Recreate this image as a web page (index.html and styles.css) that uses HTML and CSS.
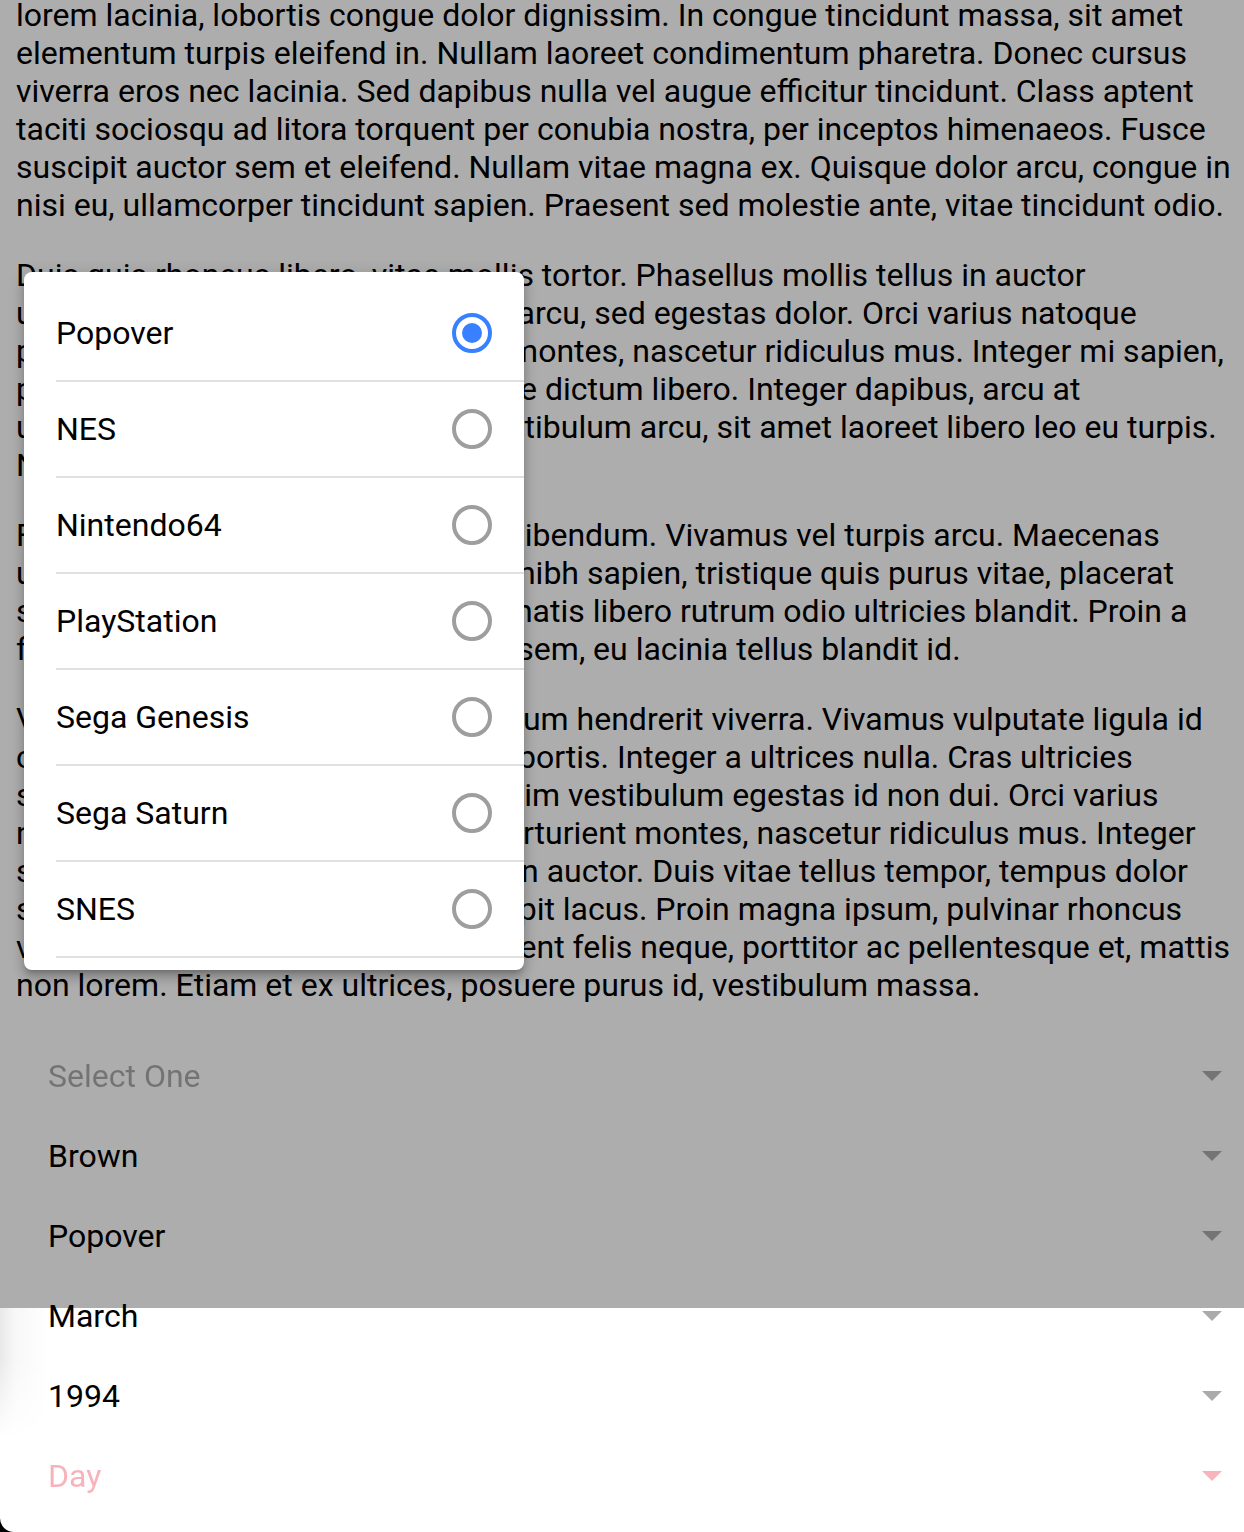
FILE: index.html
```html
<!DOCTYPE html>
<html lang="en">
<head>
<meta charset="utf-8">
<title>Select Popover</title>
<link rel="stylesheet" href="styles.css">
</head>
<body>
<div class="page">
  <div class="edge-shadow"></div>
  <main class="content">
    <p class="para first">lorem lacinia, lobortis congue dolor dignissim. In congue tincidunt massa, sit amet elementum turpis eleifend in. Nullam laoreet condimentum pharetra. Donec cursus viverra eros nec lacinia. Sed dapibus nulla vel augue efficitur tincidunt. Class aptent taciti sociosqu ad litora torquent per conubia nostra, per inceptos himenaeos. Fusce suscipit auctor sem et eleifend. Nullam vitae magna ex. Quisque dolor arcu, congue in nisi eu, ullamcorper tincidunt sapien. Praesent sed molestie ante, vitae tincidunt odio.</p>
    <p class="para">Duis quis rhoncus libero, vitae mollis tortor. Phasellus mollis tellus in auctor ullamcorper neque. Maecenas nisi, arcu, sed egestas dolor. Orci varius natoque penatibus et magnis dis parturient montes, nascetur ridiculus mus. Integer mi sapien, pellentesque eu lorem vitae, tristique dictum libero. Integer dapibus, arcu at ullamcorper justo. Aliquam erat, vestibulum arcu, sit amet laoreet libero leo eu turpis. Nunc at ultrices magna.</p>
    <p class="para">Fusce laoreet nunc vitae justo nec bibendum. Vivamus vel turpis arcu. Maecenas ultrices tortor, in consequat dolor a nibh sapien, tristique quis purus vitae, placerat sagittis. Suspendisse a lorem, venenatis libero rutrum odio ultricies blandit. Proin a feugiat mauris, vel ultrices ipsum a sem, eu lacinia tellus blandit id.</p>
    <p class="para">Vestibulum ante ipsum ut nisl a dictum hendrerit viverra. Vivamus vulputate ligula id congue eget, tristique sapien nec lobortis. Integer a ultrices nulla. Cras ultricies sollicitudin lorem, in a quam dignissim vestibulum egestas id non dui. Orci varius natoque penatibus et magnis dis parturient montes, nascetur ridiculus mus. Integer scelerisque massa, vitae aliquet ut in auctor. Duis vitae tellus tempor, tempus dolor sed ornare tellus. Aenean nec suscipit lacus. Proin magna ipsum, pulvinar rhoncus vitae sapien nunc consequat. Praesent felis neque, porttitor ac pellentesque et, mattis non lorem. Etiam et ex ultrices, posuere purus id, vestibulum massa.</p>

    <div class="select-list">
      <div class="select-row"><span class="select-text placeholder">Select One</span><span class="select-icon"></span></div>
      <div class="select-row"><span class="select-text">Brown</span><span class="select-icon"></span></div>
      <div class="select-row"><span class="select-text">Popover</span><span class="select-icon"></span></div>
      <div class="select-row"><span class="select-text">March</span><span class="select-icon"></span></div>
      <div class="select-row"><span class="select-text">1994</span><span class="select-icon"></span></div>
      <div class="select-row danger"><span class="select-text placeholder">Day</span><span class="select-icon"></span></div>
    </div>
  </main>

  <div class="backdrop"></div>

  <div class="popover" role="radiogroup">
    <div class="option"><span class="option-label">Popover</span><span class="radio checked"></span></div>
    <div class="option"><span class="option-label">NES</span><span class="radio"></span></div>
    <div class="option"><span class="option-label">Nintendo64</span><span class="radio"></span></div>
    <div class="option"><span class="option-label">PlayStation</span><span class="radio"></span></div>
    <div class="option"><span class="option-label">Sega Genesis</span><span class="radio"></span></div>
    <div class="option"><span class="option-label">Sega Saturn</span><span class="radio"></span></div>
    <div class="option"><span class="option-label">SNES</span><span class="radio"></span></div>
  </div>
</div>
</body>
</html>
```

FILE: styles.css
```css
* {
  box-sizing: border-box;
}

html,
body {
  margin: 0;
  background: #000;
}

body {
  font-family: Roboto, "Noto Sans", "Liberation Sans", sans-serif;
  color: #000;
}

.page {
  position: relative;
  width: 1244px;
  height: 1532px;
  background: #fff;
  overflow: hidden;
  border-bottom-left-radius: 14px;
}

.edge-shadow {
  position: absolute;
  left: 0;
  top: 1308px;
  width: 50px;
  height: 130px;
  background: linear-gradient(to right, rgba(0, 0, 0, 0.09), rgba(0, 0, 0, 0.03) 14px, rgba(0, 0, 0, 0) 48px);
  -webkit-mask-image: linear-gradient(to bottom, #000 40%, transparent);
  mask-image: linear-gradient(to bottom, #000 40%, transparent);
  pointer-events: none;
}

.content {
  padding: 0 12px 0 16px;
}

.para {
  margin: 32px 0;
  font-size: 32px;
  line-height: 38px;
}

.para.first {
  margin-top: -4px;
}

.select-list {
  padding: 0 10px 0 32px;
}

.select-row {
  display: flex;
  align-items: center;
  justify-content: space-between;
  height: 80px;
  font-size: 32px;
  line-height: 38px;
}

.select-text.placeholder {
  opacity: 0.33;
}

.select-icon {
  width: 0;
  height: 0;
  border-left: 10px solid transparent;
  border-right: 10px solid transparent;
  border-top: 10px solid currentColor;
  opacity: 0.33;
}

.select-row.danger {
  color: #eb445a;
}

.select-row.danger .select-text.placeholder,
.select-row.danger .select-icon {
  opacity: 0.4;
}

.backdrop {
  position: absolute;
  left: 0;
  top: 0;
  width: 100%;
  height: 1308px;
  background: rgba(0, 0, 0, 0.32);
}

.popover {
  position: absolute;
  left: 24px;
  top: 272px;
  width: 500px;
  padding: 14px 0 12px;
  background: #fff;
  border-radius: 8px;
  box-shadow: 0 5px 5px -3px rgba(0, 0, 0, 0.2), 0 8px 10px 1px rgba(0, 0, 0, 0.14), 0 3px 14px 2px rgba(0, 0, 0, 0.12);
}

.option {
  display: flex;
  align-items: center;
  justify-content: space-between;
  height: 96px;
  margin-left: 32px;
  padding: 0 32px 0 0;
  border-bottom: 2px solid #e0e0e0;
  font-size: 32px;
  line-height: 38px;
}

.radio {
  display: flex;
  align-items: center;
  justify-content: center;
  width: 40px;
  height: 40px;
  border: 4px solid #9e9e9e;
  border-radius: 50%;
}

.radio.checked {
  border-color: #3880ff;
}

.radio.checked::after {
  content: "";
  width: 20px;
  height: 20px;
  border-radius: 50%;
  background: #3880ff;
}
```
